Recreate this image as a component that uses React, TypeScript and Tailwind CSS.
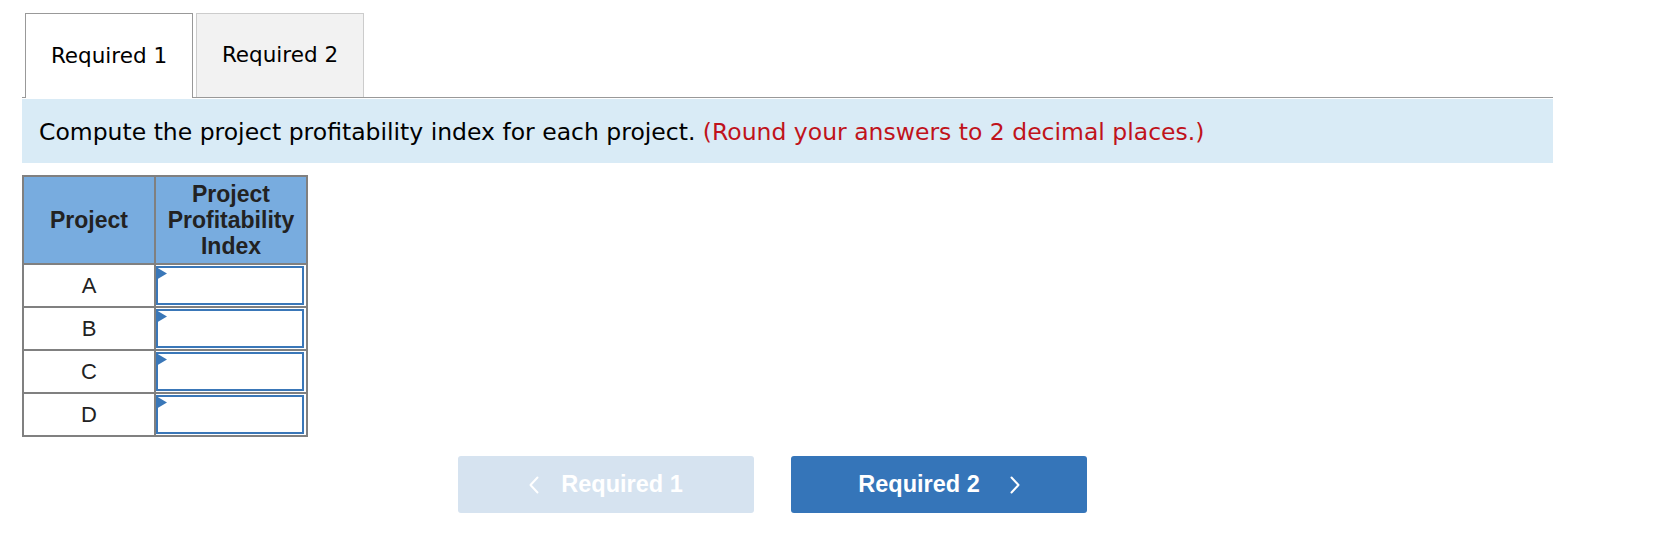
import React from "react";

const ROWS = ["A", "B", "C", "D"];

function Marker() {
  return (
    <svg className="absolute -left-[2px] -top-[1px]" width="11" height="13" viewBox="0 0 11 13">
      <polygon points="0,0 11,6.5 0,13" fill="#3a77b8" />
    </svg>
  );
}

function Chevron({ dir }: { dir: "left" | "right" }) {
  return (
    <svg width="10" height="18" viewBox="0 0 10 18" fill="none">
      <polyline
        points={dir === "right" ? "1.5,1.5 8.5,9 1.5,16.5" : "8.5,1.5 1.5,9 8.5,16.5"}
        stroke="white"
        strokeWidth="2"
        strokeLinecap="round"
        strokeLinejoin="round"
      />
    </svg>
  );
}

export default function App() {
  return (
    <div className="w-[1676px] h-[548px] bg-white">
      <div className="ml-[22px] w-[1531px] pt-[13px]">
        {/* Tabs */}
        <div className="flex items-end gap-[3px] pl-[3px] border-b border-[#999999] font-['DejaVu_Sans',Verdana,sans-serif] text-[21.5px] text-black">
          <div className="relative -mb-px flex h-[85px] w-[168px] items-center justify-center border border-b-0 border-[#999999] bg-white">
            Required 1
          </div>
          <div className="flex h-[84px] w-[168px] items-center justify-center border border-b-0 border-[#cccccc] bg-[#f2f2f2]">
            Required 2
          </div>
        </div>

        {/* Instructions */}
        <div className="mt-px flex h-[64px] items-center bg-[#d9ebf6] pl-[17px] pt-[4px] font-['DejaVu_Sans',Verdana,sans-serif] text-[23.5px] text-black">
          <span className="whitespace-pre">
            Compute the project profitability index for each project.{" "}
            <span className="text-[#c0131b]">(Round your answers to 2 decimal places.)</span>
          </span>
        </div>

        {/* Table */}
        <table className="mt-[12px] border-collapse font-['Liberation_Sans',Arial,sans-serif] text-[#222222]">
          <thead>
            <tr className="h-[88px] bg-[#78acdf] text-[23px] font-bold leading-[26px]">
              <th className="w-[132px] border-2 border-[#808080] text-center">Project</th>
              <th className="w-[152px] border-2 border-[#808080] text-center">
                Project
                <br />
                Profitability
                <br />
                Index
              </th>
            </tr>
          </thead>
          <tbody>
            {ROWS.map((r) => (
              <tr key={r} className="h-[43px] text-[22px]">
                <td className="border-2 border-[#808080] text-center">{r}</td>
                <td className="border-2 border-[#808080] p-0">
                  <div className="relative h-[39px] w-[148px] border-2 border-[#3a77b8] bg-white">
                    <Marker />
                  </div>
                </td>
              </tr>
            ))}
          </tbody>
        </table>

        {/* Navigation */}
        <div className="mt-[19px] flex gap-[37px] pl-[436px] font-['Liberation_Sans',Arial,sans-serif] text-[23.5px] font-bold text-white">
          <button className="flex h-[57px] w-[296px] items-center justify-center gap-[22px] rounded-[3px] bg-[#d6e3f0]">
            <Chevron dir="left" />
            <span>Required 1</span>
          </button>
          <button className="flex h-[57px] w-[296px] items-center justify-center gap-[30px] rounded-[3px] bg-[#3575b9]">
            <span>Required 2</span>
            <Chevron dir="right" />
          </button>
        </div>
      </div>
    </div>
  );
}
